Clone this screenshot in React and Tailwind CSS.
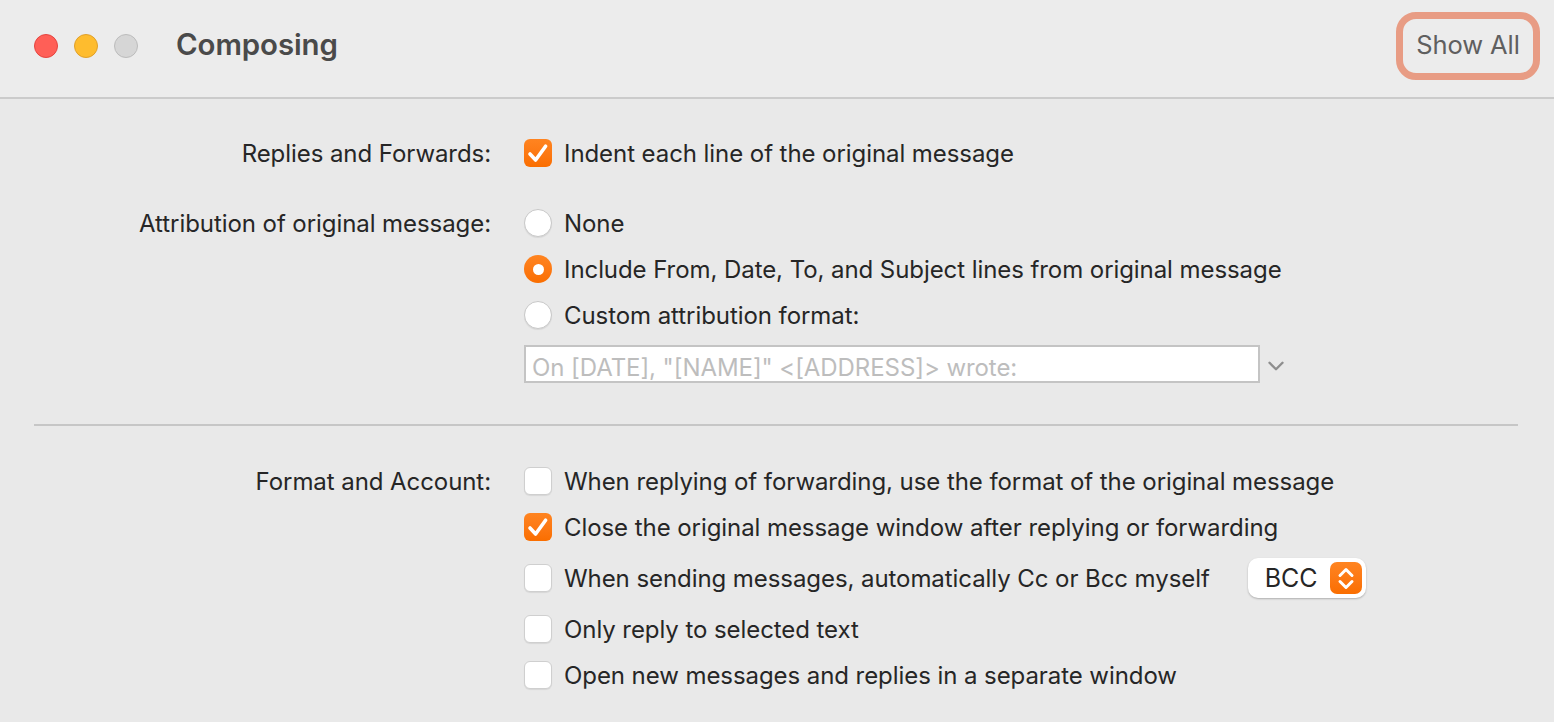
import { ChevronDown } from 'lucide-react';

function Checkbox({ checked }) {
  if (checked) {
    return (
      <span className="h-7 w-7 shrink-0 rounded-[6px] bg-gradient-to-b from-[#ff8420] to-[#fa6e00]">
        <svg viewBox="0 0 28 28" className="h-7 w-7" fill="none" stroke="white" strokeWidth="3.6" strokeLinecap="round" strokeLinejoin="round">
          <path d="M6 15 L11.6 21 L21.6 7.2" />
        </svg>
      </span>
    );
  }
  return <span className="h-7 w-7 shrink-0 rounded-[6px] border border-[#cfcfcf] bg-white shadow-[0_1px_1px_rgba(0,0,0,0.08)]" />;
}

function Radio({ checked }) {
  if (checked) {
    return (
      <span className="flex h-7 w-7 shrink-0 items-center justify-center rounded-full bg-gradient-to-b from-[#ff8420] to-[#fa6e00]">
        <span className="h-[11px] w-[11px] rounded-full bg-white" />
      </span>
    );
  }
  return <span className="h-7 w-7 shrink-0 rounded-full border border-[#c8c8c8] bg-white shadow-[0_1px_1px_rgba(0,0,0,0.08)]" />;
}

function Row({ label, control, className = 'h-7', text, children }) {
  return (
    <div className={`flex items-center ${className}`}>
      <div className="w-[457px] shrink-0 pt-[2px] text-right">{label}</div>
      <div className="ml-[33px] flex items-center gap-3">
        {control}
        <span className="pt-[2px]">{text}</span>
        {children}
      </div>
    </div>
  );
}

export default function App() {
  return (
    <div className="h-[722px] overflow-hidden bg-[#e9e9e9] font-['Inter',sans-serif] text-[24px] leading-7 tracking-[-0.07px] text-[#262626]">
      {/* Toolbar */}
      <header className="flex h-[99px] items-start justify-between border-b-2 border-[#cbcbcb] bg-[#ececec] pr-[14px]">
        <div className="flex h-[92px] items-center pl-[34px]">
          <span className="h-6 w-6 rounded-full border border-[#e5443f] bg-[#ff5f57]" />
          <span className="ml-4 h-6 w-6 rounded-full border border-[#e0a02a] bg-[#febc2e]" />
          <span className="ml-4 h-6 w-6 rounded-full border border-[#bcbcbc] bg-[#d6d6d6]" />
          <h1 className="ml-[38px] pb-[2px] text-[29.4px] font-semibold text-[#4a4a4a]">Composing</h1>
        </div>
        <button className="mt-3 flex h-[68px] w-[144px] items-center justify-center rounded-[20px] border-[7px] border-[#e89c84] pb-[2px] text-[25.5px] text-[#5f5f5f]">
          Show All
        </button>
      </header>

      <main className="pl-[34px] pr-[36px]">
        <Row label="Replies and Forwards:" control={<Checkbox checked />} className="mt-[40px] h-7" text="Indent each line of the original message" />

        <Row label="Attribution of original message:" control={<Radio />} className="mt-[42px] h-7" text="None" />
        <Row control={<Radio checked />} className="mt-[18px] h-7" text="Include From, Date, To, and Subject lines from original message" />
        <Row control={<Radio />} className="mt-[18px] h-7" text="Custom attribution format:" />
        <div className="ml-[490px] mt-[16px] flex items-center">
          <div className="flex h-[38px] w-[736px] items-center border-2 border-[#c4c4c4] bg-white pl-[6px] pt-[7px] text-[#bdbdbd]">
            On [DATE], "[NAME]" &lt;[ADDRESS]&gt; wrote:
          </div>
          <ChevronDown className="ml-[3px] mt-[3px] h-[26px] w-[26px] text-[#8e8e8e]" strokeWidth={2.2} />
        </div>

        <hr className="mt-[41px] border-t-2 border-[#c6c6c6]" />

        <Row label="Format and Account:" control={<Checkbox />} className="mt-[41px] h-7" text="When replying of forwarding, use the format of the original message" />
        <Row control={<Checkbox checked />} className="mt-[18px] h-7" text="Close the original message window after replying or forwarding" />
        <Row control={<Checkbox />} className="mt-[17px] h-10" text="When sending messages, automatically Cc or Bcc myself">
          <div className="ml-[26px] flex h-10 w-[118px] items-center justify-between rounded-[10px] bg-white pl-[17px] pr-1 shadow-[0_1px_2px_rgba(0,0,0,0.25)]">
            <span className="text-[25px]">BCC</span>
            <span className="h-8 w-8 rounded-[7px] bg-gradient-to-b from-[#ff8420] to-[#fa6e00]">
              <svg viewBox="0 0 32 32" className="h-8 w-8" fill="none" stroke="white" strokeWidth="3" strokeLinecap="round" strokeLinejoin="round">
                <path d="M10 13.5 L16 7.5 L22 13.5" />
                <path d="M10 19.5 L16 25.5 L22 19.5" />
              </svg>
            </span>
          </div>
        </Row>
        <Row control={<Checkbox />} className="mt-[17px] h-7" text="Only reply to selected text" />
        <Row control={<Checkbox />} className="mt-[18px] h-7" text="Open new messages and replies in a separate window" />
      </main>
    </div>
  );
}
